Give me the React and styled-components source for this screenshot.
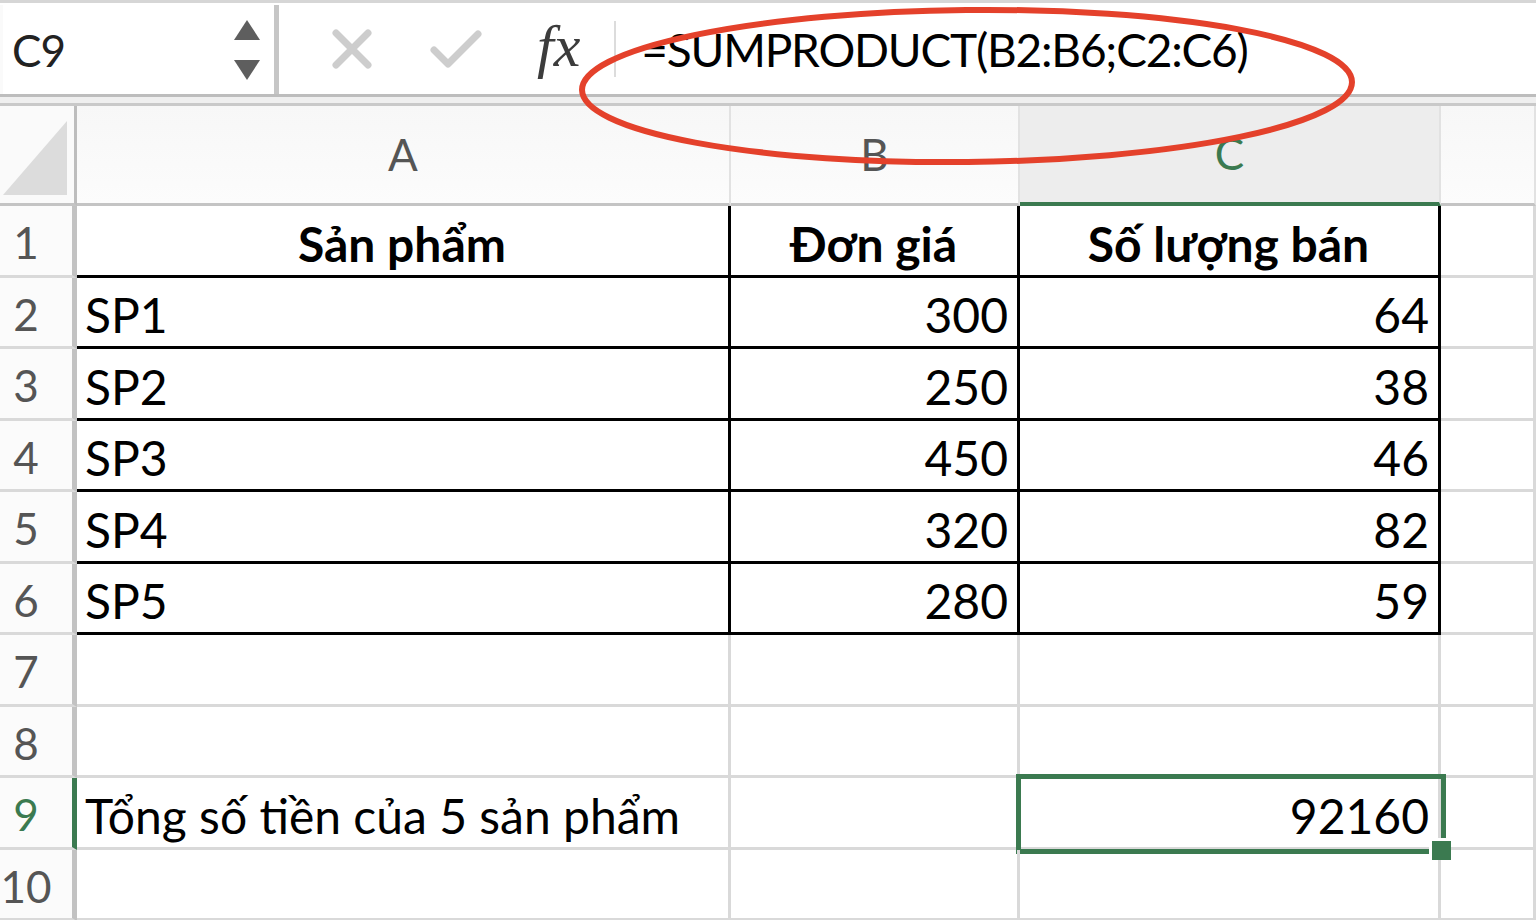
import styled, { createGlobalStyle } from "styled-components";

const GREEN = "#3b7a50";
const GRID = "#d9d9d9";

const GlobalStyle = createGlobalStyle`
    html, body {
        margin: 0;
        padding: 0;
        background: #fff;
    }
    body {
        font-family: Lato, "Noto Sans", "Liberation Sans", sans-serif;
    }
`;

const Page = styled.div`
    position: relative;
    width: 1536px;
    height: 920px;
    overflow: hidden;
    background: #fff;
`;

const Toolbar = styled.div`
    display: flex;
    align-items: stretch;
    height: 97px;
    box-sizing: border-box;
    border-top: 3px solid #d6d6d6;
    border-bottom: 3px solid #bdbdbd;
    background: #fff;
`;

const NameBox = styled.div`
    display: flex;
    align-items: center;
    justify-content: space-between;
    width: 279px;
    box-sizing: border-box;
    padding: 0 14px 0 9px;
    margin-top: 2px;
    border-right: 5px solid #c6c6c6;
    border-left: 3px solid #fafafa;
    font-size: 44px;
    letter-spacing: -1px;
    color: #222;
`;

const Spinner = styled.div`
    display: flex;
    flex-direction: column;
    gap: 20px;
`;

const Arrow = styled.span`
    width: 0;
    height: 0;
    border-left: 13px solid transparent;
    border-right: 13px solid transparent;
    ${p => p.$down
        ? `border-top: 20px solid #5e5e5e;`
        : `border-bottom: 20px solid #5e5e5e;`}
`;

const Actions = styled.div`
    display: flex;
    align-items: center;
    padding-left: 52px;
    gap: 56px;
`;

const Fx = styled.span`
    font-family: "Liberation Serif", "DejaVu Serif", serif;
    font-style: italic;
    font-size: 60px;
    color: #3c3c3c;
    margin-left: -2px;
    margin-top: -4px;
`;

const FxDivider = styled.span`
    align-self: center;
    width: 2px;
    height: 56px;
    background: #dcdcdc;
    margin: 0 25px 0 34px;
`;

const Formula = styled.div`
    display: flex;
    align-items: center;
    padding-top: 2px;
    font-size: 46px;
    color: #000;
    letter-spacing: -1.2px;
`;

const Band = styled.div`
    height: 6px;
    background: #efefef;
    border-bottom: 3px solid #c9c9c9;
`;

const Sheet = styled.div`
    display: grid;
    grid-template-columns: 77px 654px 289px 421px 1fr;
    grid-template-rows: 100px repeat(10, 71.5px);
`;

const Corner = styled.div`
    box-sizing: border-box;
    background: #fafafa;
    border-right: 3px solid #bdbdbd;
    border-bottom: 3px solid #c4c4c4;
    display: flex;
    align-items: flex-end;
    padding: 0 7px 8px 3px;
`;

const ColHead = styled.div`
    display: flex;
    align-items: center;
    justify-content: center;
    box-sizing: border-box;
    padding-bottom: 2px;
    background: ${p => p.$active ? "#ededed" : "linear-gradient(#f7f7f7, #fcfcfc)"};
    border-right: 2px solid #e2e2e2;
    border-bottom: ${p => p.$active ? `4px solid ${GREEN}` : "3px solid #c4c4c4"};
    font-size: 44px;
    color: ${p => p.$active ? GREEN : "#555"};
`;

const RowHead = styled.div`
    display: flex;
    align-items: center;
    justify-content: center;
    box-sizing: border-box;
    padding: 4px 20px 0 0;
    background: #fbfbfb;
    border-right: 5px solid ${p => p.$active ? GREEN : "#c2c2c2"};
    border-bottom: 3px solid ${GRID};
    font-size: 44px;
    color: ${p => p.$active ? GREEN : "#555"};
`;

const Cell = styled.div`
    position: relative;
    display: flex;
    align-items: center;
    justify-content: ${p => p.$align === "right" ? "flex-end" : p.$align === "center" ? "center" : "flex-start"};
    box-sizing: border-box;
    padding: 6px 9px 0 8px;
    border-right: 3px solid ${p => p.$boxed ? "#000" : GRID};
    border-bottom: 3px solid ${p => p.$boxed ? "#000" : GRID};
    font-size: 48px;
    font-weight: ${p => p.$bold ? 700 : 400};
    color: #000;
    white-space: nowrap;
`;

const Selection = styled.div`
    position: absolute;
    left: -4px;
    top: -4px;
    right: -8px;
    bottom: -7px;
    border: 5px solid ${GREEN};
    pointer-events: none;
`;

const Handle = styled.div`
    position: absolute;
    right: -10px;
    bottom: -11px;
    width: 22px;
    height: 22px;
    box-sizing: border-box;
    background: ${GREEN};
    border-top: 3px solid #fff;
    border-left: 3px solid #fff;
    z-index: 1;
`;

const Mark = styled.svg`
    position: absolute;
    left: 0;
    top: 0;
    pointer-events: none;
`;

const rows = [
    { cells: ["Sản phẩm", "Đơn giá", "Số lượng bán"], header: true },
    { cells: ["SP1", "300", "64"] },
    { cells: ["SP2", "250", "38"] },
    { cells: ["SP3", "450", "46"] },
    { cells: ["SP4", "320", "82"] },
    { cells: ["SP5", "280", "59"] },
    { cells: ["", "", ""] },
    { cells: ["", "", ""] },
    { cells: ["Tổng số tiền của 5 sản phẩm", "", "92160"], selected: 2 },
    { cells: ["", "", ""] },
];

function CrossIcon() {
    return (
        <svg width="42" height="42" viewBox="0 0 42 42">
            <path d="M5 5 L37 37 M37 5 L5 37" stroke="#cdcdcd" strokeWidth="7" strokeLinecap="round" />
        </svg>
    );
}

function CheckIcon() {
    return (
        <svg width="54" height="42" viewBox="0 0 54 42">
            <path d="M5 22 L19 36 L49 6" stroke="#cdcdcd" strokeWidth="7" strokeLinecap="round" strokeLinejoin="round" fill="none" />
        </svg>
    );
}

function App() {
    return (
        <Page>
            <GlobalStyle />
            <Toolbar>
                <NameBox>
                    C9
                    <Spinner>
                        <Arrow />
                        <Arrow $down />
                    </Spinner>
                </NameBox>
                <Actions>
                    <CrossIcon />
                    <CheckIcon />
                    <Fx>fx</Fx>
                </Actions>
                <FxDivider />
                <Formula>=SUMPRODUCT(B2:B6;C2:C6)</Formula>
            </Toolbar>
            <Band />
            <Sheet>
                <Corner>
                    <svg width="64" height="74" viewBox="0 0 64 74">
                        <polygon points="0,74 64,0 64,74" fill="#dcdcdc" />
                    </svg>
                </Corner>
                <ColHead>A</ColHead>
                <ColHead>B</ColHead>
                <ColHead $active>C</ColHead>
                <ColHead />
                {rows.map((row, r) => {
                    const boxed = r < 6;
                    return [
                        <RowHead key={`h${r}`} $active={row.selected !== undefined}>{r + 1}</RowHead>,
                        ...row.cells.map((text, c) => (
                            <Cell
                                key={`${r}-${c}`}
                                $boxed={boxed}
                                $bold={row.header}
                                $align={row.header ? "center" : c === 0 ? "left" : "right"}
                            >
                                {text}
                                {row.selected === c && (
                                    <Selection>
                                        <Handle />
                                    </Selection>
                                )}
                            </Cell>
                        )),
                        <Cell key={`${r}-d`} />,
                    ];
                })}
            </Sheet>
            <Mark width="1536" height="920">
                <ellipse cx="967" cy="86" rx="385" ry="76" fill="none" stroke="#e4412b" strokeWidth="6" transform="rotate(-0.6 967 86)" />
            </Mark>
        </Page>
    );
}

export default App;
